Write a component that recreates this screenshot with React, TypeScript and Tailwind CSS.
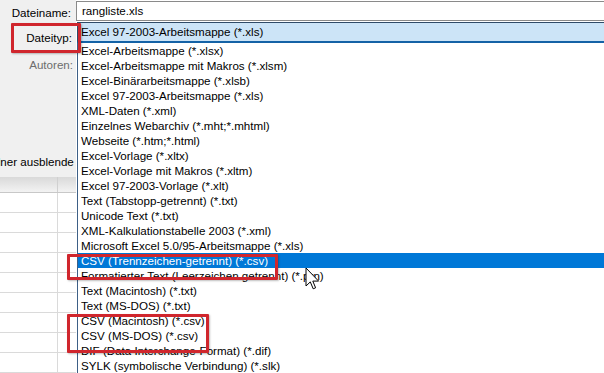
const items = [
  "Excel-Arbeitsmappe (*.xlsx)",
  "Excel-Arbeitsmappe mit Makros (*.xlsm)",
  "Excel-Binärarbeitsmappe (*.xlsb)",
  "Excel 97-2003-Arbeitsmappe (*.xls)",
  "XML-Daten (*.xml)",
  "Einzelnes Webarchiv (*.mht;*.mhtml)",
  "Webseite (*.htm;*.html)",
  "Excel-Vorlage (*.xltx)",
  "Excel-Vorlage mit Makros (*.xltm)",
  "Excel 97-2003-Vorlage (*.xlt)",
  "Text (Tabstopp-getrennt) (*.txt)",
  "Unicode Text (*.txt)",
  "XML-Kalkulationstabelle 2003 (*.xml)",
  "Microsoft Excel 5.0/95-Arbeitsmappe (*.xls)",
  "CSV (Trennzeichen-getrennt) (*.csv)",
  "Formatierter Text (Leerzeichen getrennt) (*.prn)",
  "Text (Macintosh) (*.txt)",
  "Text (MS-DOS) (*.txt)",
  "CSV (Macintosh) (*.csv)",
  "CSV (MS-DOS) (*.csv)",
  "DIF (Data Interchange-Format) (*.dif)",
  "SYLK (symbolische Verbindung) (*.slk)",
];

const SELECTED = 14;

function Cursor() {
  return (
    <svg width="15" height="24" viewBox="0 0 15 24" className="absolute left-[305px] top-[267px]">
      <path
        d="M1 1 L1 19 L5.3 14.9 L8.2 21.8 L10.6 20.8 L7.8 14.1 L13.6 14.1 Z"
        fill="#fff"
        stroke="#000"
        strokeWidth="1"
      />
    </svg>
  );
}

export default function App() {
  return (
    <div className="relative w-[604px] h-[373px] overflow-hidden bg-white text-[11.6px] text-black font-['Liberation_Sans',Arial,sans-serif]">
      <div className="flex h-full">
        {/* left: dialog labels + spreadsheet grid */}
        <div className="w-[76px] shrink-0 flex flex-col overflow-hidden">
          <div className="h-[182px] bg-[#f0f0f0] flex flex-col">
            <div className="h-[25px] flex items-center justify-end pr-[5px]">Dateiname:</div>
            <div className="h-[26px] flex items-center justify-end pr-[4px]">Dateityp:</div>
            <div className="h-[28px] flex items-center justify-end pr-[3px] text-[#6d6d6d]">Autoren:</div>
            <div className="mt-[75px] h-[16px] w-[74px] overflow-hidden flex items-center">
              <span className="whitespace-nowrap -ml-[19px]">Ordner ausblenden</span>
            </div>
          </div>
          <div className="h-[16px] flex border-b border-[#c8c8c8] bg-gradient-to-b from-[#d9d9d9] to-[#f3f3f3]">
            <div className="w-[58px] border-r border-[#d0d0d0]" />
          </div>
          {Array.from({ length: 9 }).map((_, i) => (
            <div key={i} className="h-[20px] shrink-0 flex border-b border-[#dadada]">
              <div className="w-[58px] border-r border-[#dadada]" />
            </div>
          ))}
        </div>

        {/* right: file name, type combo and open list */}
        <div className="flex-1 flex flex-col pt-px">
          <div className="h-[23px] border border-r-0 border-[#8a8a8a] bg-white flex items-center pl-[5px]">
            rangliste.xls
          </div>
          <div className="mt-px ml-px h-[25px] border-t border-l border-[#2f4b68] border-b-2 border-b-[#1462a6] bg-[#cce4f7] flex items-center pl-[3px]">
            Excel 97-2003-Arbeitsmappe (*.xls)
          </div>
          <div className="ml-px flex-1 border-l border-[#3d5f86] bg-white flex flex-col">
            {items.map((t, i) => (
              <div
                key={t}
                className={
                  i === SELECTED
                    ? "h-[15px] shrink-0 leading-[15px] pl-[3px] whitespace-nowrap bg-[#0078d7] text-white"
                    : "h-[15px] shrink-0 leading-[15px] pl-[3px] whitespace-nowrap"
                }
              >
                {t}
              </div>
            ))}
          </div>
        </div>
      </div>

      {/* annotations */}
      <div className="absolute left-[11px] top-[23px] w-[70px] h-[30px] border-[3px] border-[#d0262d] rounded-[1px] shadow-[1px_1px_2px_rgba(0,0,0,0.25)]" />
      <div className="absolute left-[67px] top-[254px] w-[211px] h-[26px] border-[3px] border-[#d0262d] rounded-[1px] shadow-[1px_1px_2px_rgba(0,0,0,0.25)]" />
      <div className="absolute left-[67px] top-[314px] w-[142px] h-[39px] border-[3px] border-[#d0262d] rounded-[1px] shadow-[1px_1px_2px_rgba(0,0,0,0.25)]" />
      <Cursor />
    </div>
  );
}
